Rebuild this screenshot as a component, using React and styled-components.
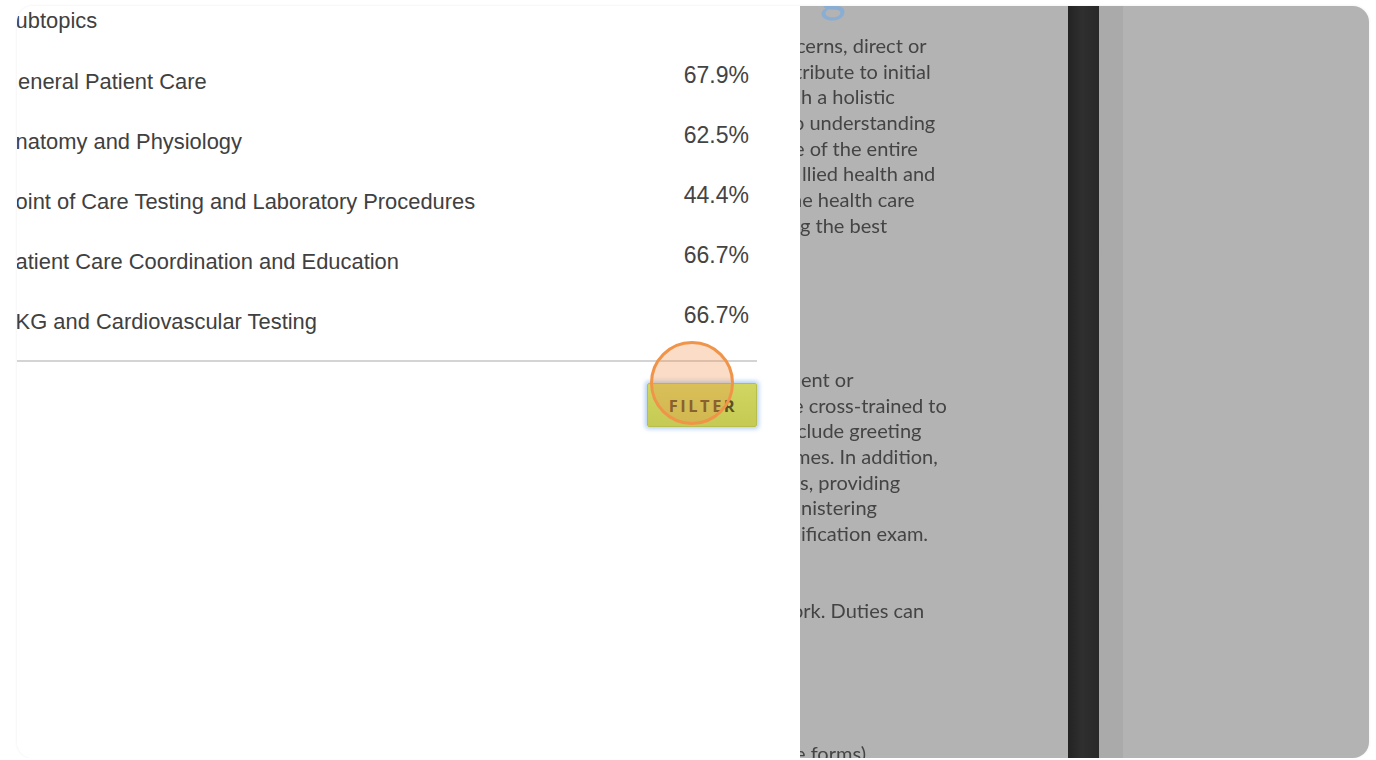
import React from "react";
import styled, { createGlobalStyle } from "styled-components";

const GlobalStyle = createGlobalStyle`
  html, body {
    margin: 0;
    padding: 0;
    background: #ffffff;
  }
  body {
    font-family: "Liberation Sans", Arial, sans-serif;
    overflow: hidden;
  }
`;

const subtopics = [
    { name: "General Patient Care", score: "67.9%" },
    { name: "Anatomy and Physiology", score: "62.5%" },
    { name: "Point of Care Testing and Laboratory Procedures", score: "44.4%" },
    { name: "Patient Care Coordination and Education", score: "66.7%" },
    { name: "EKG and Cardiovascular Testing", score: "66.7%" },
];

// lines of the article behind the modal, shift = how much of the first glyph is cut off
const articleLines = [
    { text: "cerns, direct or", shift: 4 },
    { text: "tribute to initial", shift: 5 },
    { text: "h a holistic", shift: -1 },
    { text: "o understanding", shift: 7 },
    { text: "e of the entire", shift: 6 },
    { text: "llied health and", shift: -2 },
    { text: "he health care", shift: 9 },
    { text: "g the best", shift: 0 },
    { text: "", shift: 0 },
    { text: "", shift: 0 },
    { text: "", shift: 0 },
    { text: "", shift: 0 },
    { text: "", shift: 0 },
    { text: "ent or", shift: -1 },
    { text: "e cross-trained to", shift: 7 },
    { text: "clude greeting", shift: 3 },
    { text: "mes. In addition,", shift: 6 },
    { text: "s, providing", shift: 0 },
    { text: "nistering", shift: -1 },
    { text: "ification exam.", shift: -1 },
    { text: "", shift: 0 },
    { text: "", shift: 0 },
    { text: "ork. Duties can", shift: 8 },
    { text: "", shift: 0 },
    { text: "", shift: 0 },
    { text: "", shift: 0 },
    { text: "", shift: 0 },
    { text: "e forms)", shift: 5, gap: 14 },
];

const App = () => {
    return (
        <>
            <GlobalStyle />
            <Frame>
                <FilterPanel>
                    <Inner>
                        <Title>Subtopics</Title>
                        {subtopics.map((item) => (
                            <Row key={item.name}>
                                <Label>{item.name}</Label>
                                <Percent>{item.score}</Percent>
                            </Row>
                        ))}
                        <Divider />
                        <Actions>
                            <ButtonWrap>
                                <FilterButton>Filter</FilterButton>
                                <Highlight />
                            </ButtonWrap>
                        </Actions>
                    </Inner>
                </FilterPanel>
                <Article>
                    <HeadingPeek>
                        <span>g</span>
                    </HeadingPeek>
                    {articleLines.map((line, i) => (
                        <Line key={i} $shift={line.shift} $gap={line.gap || 0}>
                            {line.text || "\u00a0"}
                        </Line>
                    ))}
                </Article>
                <Spine />
                <Gutter />
                <Page />
            </Frame>
        </>
    );
};

const Frame = styled.div`
  display: flex;
  margin: 6px 7px 0 17px;
  height: 752px;
  border-radius: 16px;
  overflow: hidden;
  box-shadow: 0 0 3px rgba(0, 0, 0, 0.08);
`;

const FilterPanel = styled.section`
  width: 783px;
  flex-shrink: 0;
  background: #ffffff;
  overflow: hidden;
`;

const Inner = styled.div`
  margin-left: -16px;
  padding-right: 43px;
  color: #404040;
`;

const Title = styled.h3`
  margin: 0 0 24px;
  height: 30px;
  line-height: 30px;
  font-size: 21.9px;
  font-weight: normal;
`;

const Row = styled.div`
  display: flex;
  justify-content: space-between;
  align-items: flex-start;
  height: 60px;
`;

const Label = styled.span`
  padding-top: 7px;
  line-height: 30px;
  font-size: 21.9px;
  white-space: nowrap;
`;

const Percent = styled.span`
  padding-right: 8px;
  line-height: 30px;
  font-size: 23px;
  color: #444;
`;

const Divider = styled.hr`
  margin: 0;
  border: none;
  border-top: 2px solid #d4d4d4;
`;

const Actions = styled.div`
  display: flex;
  justify-content: flex-end;
  padding-top: 21px;
`;

const ButtonWrap = styled.div`
  position: relative;
`;

const FilterButton = styled.button`
  width: 110px;
  height: 44px;
  border: 1px solid #b8be4c;
  border-radius: 2px;
  background: linear-gradient(#d1d662, #c4ca53);
  box-shadow: 0 0 4px 2px rgba(120, 170, 230, 0.55);
  color: #5e4f26;
  font-family: "Open Sans", "Liberation Sans", sans-serif;
  font-weight: 700;
  font-size: 16.5px;
  letter-spacing: 2.5px;
  text-transform: uppercase;
  padding: 0 0 0 2px;
`;

const Highlight = styled.div`
  position: absolute;
  left: 3px;
  top: -42px;
  width: 84px;
  height: 84px;
  box-sizing: border-box;
  border-radius: 50%;
  border: 3px solid #f0944a;
  background: rgba(240, 140, 70, 0.3);
  pointer-events: none;
`;

const Article = styled.div`
  width: 268px;
  flex-shrink: 0;
  background: #b3b3b3;
  overflow: hidden;
  font-family: Lato, "Open Sans", sans-serif;
  font-size: 20px;
  color: #444;
`;

const HeadingPeek = styled.div`
  display: flow-root;
  height: 27px;
  padding-left: 20px;
  overflow: visible;
  span {
    display: block;
    margin-top: -39px;
    font-size: 50px;
    line-height: 50px;
    color: #8aaed3;
    filter: blur(0.6px);
  }
`;

const Line = styled.div`
  margin-left: ${(p) => -p.$shift}px;
  margin-top: ${(p) => p.$gap}px;
  height: 25.7px;
  line-height: 25.7px;
  white-space: nowrap;
  filter: blur(0.3px);
`;

const Spine = styled.div`
  width: 31px;
  flex-shrink: 0;
  background: linear-gradient(90deg, #232323, #2f2f2f 45%, #282828);
`;

const Gutter = styled.div`
  width: 24px;
  flex-shrink: 0;
  background: #aaaaaa;
`;

const Page = styled.div`
  flex: 1;
  background: #b3b3b3;
`;

export default App;
